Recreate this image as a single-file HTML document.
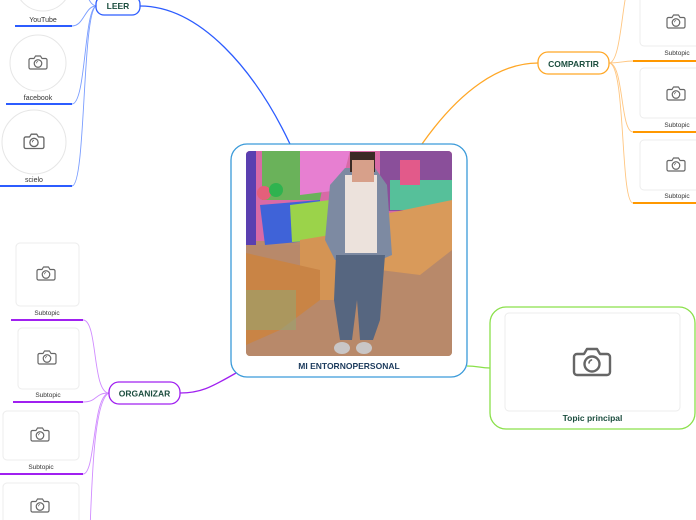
<!DOCTYPE html>
<html><head><meta charset="utf-8"><style>
html,body{margin:0;padding:0;background:#fff;width:696px;height:520px;overflow:hidden}
svg{display:block}
text{font-family:"Liberation Sans",sans-serif}
</style></head><body>
<svg width="696" height="520" viewBox="0 0 696 520" xmlns="http://www.w3.org/2000/svg">
<defs>
<g id="cam"><path d="M5 9h7l3-5h10l3 5h7a3 3 0 0 1 3 3v15a3 3 0 0 1-3 3H5a3 3 0 0 1-3-3V12a3 3 0 0 1 3-3z" fill="none" stroke="#666" stroke-width="2.4" stroke-linejoin="round"/><circle cx="20" cy="19" r="7.5" fill="none" stroke="#666" stroke-width="2.4"/><path d="M17 18a3.5 3.5 0 0 1 2.5-3" fill="none" stroke="#666" stroke-width="1.6" stroke-linecap="round"/></g>
<clipPath id="pc"><rect x="246" y="151" width="206" height="205" rx="4"/></clipPath>
</defs>

<path d="M290 144 C255 70 200 6 140 6" fill="none" stroke="#2c5cff" stroke-width="1.3"/>
<g fill="none" stroke="#7a9dff" stroke-width="0.9">
<path d="M96 6 C85 6 84 26 72 26"/><path d="M96 6 C84 10 86 104 72 104"/><path d="M96 6 C82 14 86 186 72 186"/><path d="M96 6 C88 4 90 -5 80 -10"/>
</g>
<g stroke="#2c5cff" stroke-width="2"><line x1="15" y1="26" x2="72" y2="26"/><line x1="6" y1="104" x2="72" y2="104"/><line x1="0" y1="186" x2="72" y2="186"/></g>

<path d="M422 144 C460 90 500 63 538 63" fill="none" stroke="#ffa726" stroke-width="1.3"/>
<g fill="none" stroke="#ffc680" stroke-width="0.9">
<path d="M609 63 C622 63 622 -10 630 -15"/><path d="M609 63 C622 63 622 61 633 61"/><path d="M609 63 C624 63 620 132 633 132"/><path d="M609 63 C626 63 620 203 633 203"/>
</g>
<g stroke="#ff9800" stroke-width="2"><line x1="633" y1="61" x2="696" y2="61"/><line x1="633" y1="132" x2="696" y2="132"/><line x1="633" y1="203" x2="696" y2="203"/></g>

<path d="M236 373 C210 388 200 393 180 393" fill="none" stroke="#a020f0" stroke-width="1.3"/>
<g fill="none" stroke="#d08cff" stroke-width="0.9">
<path d="M109 393 C92 393 98 320 83 320"/><path d="M109 393 C94 393 98 402 83 402"/><path d="M109 393 C92 396 96 474 83 474"/><path d="M109 393 C94 400 92 480 90 530"/>
</g>
<g stroke="#a020f0" stroke-width="2"><line x1="11" y1="320" x2="83" y2="320"/><line x1="13" y1="402" x2="83" y2="402"/><line x1="0" y1="474" x2="83" y2="474"/></g>

<path d="M467 366 C478 366 480 368 490 368" fill="none" stroke="#8ae04a" stroke-width="1.3"/>

<g fill="#fff" stroke="#e6e6e6" stroke-width="1">
<circle cx="43" cy="-17" r="28"/><circle cx="38" cy="63" r="28"/><circle cx="34" cy="142" r="32"/>
</g>
<use href="#cam" transform="translate(28,54) scale(0.5)"/>
<use href="#cam" transform="translate(23,132) scale(0.55)"/>
<g font-size="7" fill="#333" text-anchor="middle"><text x="43" y="22">YouTube</text><text x="38" y="100">facebook</text><text x="34" y="182">scielo</text></g>

<rect x="96" y="-4" width="44" height="19" rx="8" fill="#fff" stroke="#2c5cff" stroke-width="1.3"/>
<text x="118" y="9" font-size="8.5" font-weight="bold" fill="#1b4d3e" text-anchor="middle">LEER</text>

<rect x="538" y="52" width="71" height="22" rx="10" fill="#fff" stroke="#ffa726" stroke-width="1.3"/>
<text x="573.5" y="67" font-size="8.5" font-weight="bold" fill="#1b4d3e" text-anchor="middle">COMPARTIR</text>

<g fill="#fff" stroke="#ececec" stroke-width="1"><rect x="640" y="-5" width="62" height="51" rx="4"/><rect x="640" y="68" width="62" height="50" rx="4"/><rect x="640" y="140" width="62" height="50" rx="4"/></g>
<use href="#cam" transform="translate(666,13) scale(0.5)"/>
<use href="#cam" transform="translate(666,85) scale(0.5)"/>
<use href="#cam" transform="translate(666,156) scale(0.5)"/>
<g font-size="6.5" fill="#333" text-anchor="middle"><text x="677" y="55">Subtopic</text><text x="677" y="127">Subtopic</text><text x="677" y="198">Subtopic</text></g>

<rect x="109" y="382" width="71" height="22" rx="10" fill="#fff" stroke="#a020f0" stroke-width="1.3"/>
<text x="144.5" y="396.5" font-size="8.5" font-weight="bold" fill="#1b4d3e" text-anchor="middle">ORGANIZAR</text>

<g fill="#fff" stroke="#ececec" stroke-width="1"><rect x="16" y="243" width="63" height="63" rx="4"/><rect x="18" y="328" width="61" height="61" rx="4"/><rect x="3" y="411" width="76" height="49" rx="4"/><rect x="3" y="483" width="76" height="50" rx="4"/></g>
<use href="#cam" transform="translate(36,265) scale(0.5)"/>
<use href="#cam" transform="translate(37,349) scale(0.5)"/>
<use href="#cam" transform="translate(30,426) scale(0.5)"/>
<use href="#cam" transform="translate(30,497) scale(0.5)"/>
<g font-size="6.5" fill="#333" text-anchor="middle"><text x="47" y="315">Subtopic</text><text x="48" y="397">Subtopic</text><text x="41" y="469">Subtopic</text></g>

<rect x="231" y="144" width="236" height="233" rx="16" fill="#fff" stroke="#3a9ad9" stroke-width="1.3"/>
<g clip-path="url(#pc)">
<rect x="246" y="151" width="206" height="205" fill="#b98b6c"/>
<rect x="246" y="151" width="206" height="90" fill="#d86aa6"/>
<polygon points="262,151 330,151 320,200 262,200" fill="#6ab25a"/>
<polygon points="300,151 350,151 340,190 300,195" fill="#e77fd1"/>
<rect x="380" y="151" width="72" height="60" fill="#8a4f9a"/>
<rect x="390" y="180" width="62" height="30" fill="#56c09a"/>
<rect x="400" y="160" width="20" height="25" fill="#e25a8a"/>
<rect x="246" y="151" width="10" height="150" fill="#5a3fb0"/>
<polygon points="260,205 320,200 320,240 265,245" fill="#3f63d8"/>
<polygon points="290,205 330,200 330,240 292,242" fill="#9bd34a"/>
<circle cx="264" cy="193" r="7" fill="#e45f7a"/><circle cx="276" cy="190" r="7" fill="#2fb34f"/>
<rect x="246" y="245" width="206" height="111" fill="#b8896a"/>
<polygon points="300,240 360,230 360,300 300,300" fill="#d49454"/>
<polygon points="380,215 452,200 452,250 420,275 380,270" fill="#d99a5a"/>
<polygon points="246,253 320,270 320,300 280,330 246,345" fill="#c98445"/>
<rect x="246" y="290" width="50" height="40" fill="#97a370" opacity="0.6"/>
<polygon points="330,185 345,168 375,168 387,185 392,255 380,260 335,260 325,240" fill="#7d8aa2"/>
<rect x="345" y="175" width="32" height="78" fill="#ece2dc"/>
<rect x="350" y="152" width="25" height="20" fill="#3a2a24"/>
<rect x="352" y="160" width="22" height="22" fill="#d7a08a"/>
<polygon points="336,255 385,255 380,320 373,340 360,340 357,300 352,340 340,340 334,300" fill="#566680"/>
<ellipse cx="342" cy="348" rx="8" ry="6" fill="#c9c6c6"/><ellipse cx="364" cy="348" rx="8" ry="6" fill="#c9c6c6"/>
</g>
<text x="349" y="369" font-size="8.5" font-weight="bold" fill="#1b3a5c" text-anchor="middle">MI ENTORNOPERSONAL</text>

<rect x="490" y="307" width="205" height="122" rx="16" fill="#fff" stroke="#8ae04a" stroke-width="1.3"/>
<rect x="505" y="313" width="175" height="98" rx="4" fill="#fff" stroke="#ececec" stroke-width="1"/>
<use href="#cam" transform="translate(572,345) scale(1)"/>
<text x="592.5" y="421" font-size="8.5" font-weight="bold" fill="#1b4d3e" text-anchor="middle">Topic principal</text>
</svg>
</body></html>
